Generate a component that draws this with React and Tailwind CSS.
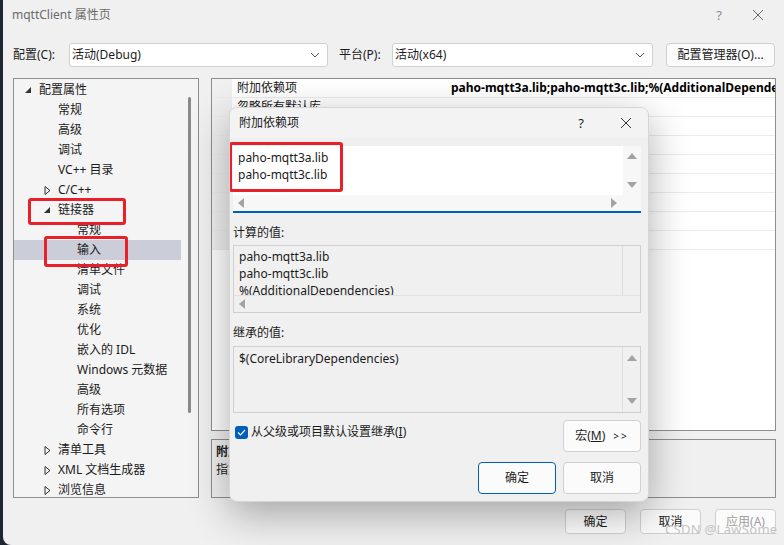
const tree = [
  { label: '配置属性', level: 0, arrow: 'open' },
  { label: '常规', level: 1 },
  { label: '高级', level: 1 },
  { label: '调试', level: 1 },
  { label: 'VC++ 目录', level: 1 },
  { label: 'C/C++', level: 1, arrow: 'closed' },
  { label: '链接器', level: 1, arrow: 'open' },
  { label: '常规', level: 2 },
  { label: '输入', level: 2, selected: true },
  { label: '清单文件', level: 2 },
  { label: '调试', level: 2 },
  { label: '系统', level: 2 },
  { label: '优化', level: 2 },
  { label: '嵌入的 IDL', level: 2 },
  { label: 'Windows 元数据', level: 2 },
  { label: '高级', level: 2 },
  { label: '所有选项', level: 2 },
  { label: '命令行', level: 2 },
  { label: '清单工具', level: 1, arrow: 'closed' },
  { label: 'XML 文档生成器', level: 1, arrow: 'closed' },
  { label: '浏览信息', level: 1, arrow: 'closed' },
]

const props = [
  { name: '附加依赖项', value: 'paho-mqtt3a.lib;paho-mqtt3c.lib;%(AdditionalDependencies)' },
  { name: '忽略所有默认库', value: '' },
  { name: '忽略特定默认库', value: '' },
  { name: '模块定义文件', value: '' },
  { name: '将模块添加到程序集', value: '' },
  { name: '嵌入托管资源文件', value: '' },
  { name: '强制符号引用', value: '' },
  { name: '延迟加载的 DLL', value: '' },
  { name: '程序集链接资源', value: '' },
]

const spacer = ['w-[11px]', 'w-[30px]', 'w-[49px]']

function Arrow({ kind }) {
  if (kind === 'open')
    return (
      <svg width="7" height="7" viewBox="0 0 7 7">
        <polygon points="6,0 6,6 0,6" fill="#333" />
      </svg>
    )
  if (kind === 'closed')
    return (
      <svg width="7" height="9" viewBox="0 0 7 9">
        <polygon points="1,0.5 6,4.5 1,8.5" fill="none" stroke="#333" strokeWidth="1" />
      </svg>
    )
  return null
}

function Tri({ dir }) {
  const pts = {
    up: '0,6 5,0 10,6',
    down: '0,0 10,0 5,6',
    left: '6,0 6,10 0,5',
    right: '0,0 0,10 6,5',
  }[dir]
  const w = dir === 'up' || dir === 'down' ? 10 : 6
  const h = dir === 'up' || dir === 'down' ? 6 : 10
  return (
    <svg width={w} height={h} viewBox={`0 0 ${w} ${h}`}>
      <polygon points={pts} fill="#a3a3a3" />
    </svg>
  )
}

function Combo({ text, width }) {
  return (
    <div className={`${width} h-[24px] bg-white border border-[#d1d1d1] rounded-[3px] flex items-center justify-between pl-[2px] pr-[7px]`}>
      <span>{text}</span>
      <svg width="10" height="6" viewBox="0 0 10 6">
        <polyline points="1,1 5,5 9,1" fill="none" stroke="#555" strokeWidth="1" />
      </svg>
    </div>
  )
}

function Btn({ children, primary, disabled, className = '' }) {
  return (
    <div
      className={`flex items-center justify-center rounded-[4px] bg-[#fbfbfb] border ${
        primary ? 'border-[#005fb8]' : 'border-[#d0d0d0]'
      } ${disabled ? 'text-[#a0a0a0]' : 'text-[#1b1b1b]'} ${className}`}
    >
      {children}
    </div>
  )
}

export default function App() {
  return (
    <div className="relative w-[784px] h-[545px] overflow-hidden bg-[#1e2535] flex font-['Noto_Sans','Noto_Sans_CJK_SC',sans-serif] text-[12px] text-[#1b1b1b] leading-none">
      <div className="ml-[3px] flex-1 min-w-0 bg-[#f0f0f0] rounded-bl-[8px] flex flex-col">
        {/* title bar */}
        <div className="h-[30px] flex items-center justify-between pl-[9px] pr-[20px] text-[#6b6b6b]">
          <span>mqttClient 属性页</span>
          <div className="flex items-center gap-[30px] text-[#8a8a8a]">
            <span className="text-[13px]">?</span>
            <svg width="12" height="12" viewBox="0 0 12 12">
              <path d="M1 1 L11 11 M11 1 L1 11" stroke="#666" strokeWidth="1" />
            </svg>
          </div>
        </div>

        {/* config row */}
        <div className="mt-[13px] h-[24px] flex items-center pl-[10px] pr-[8px]">
          <span className="w-[56px]">配置(C):</span>
          <Combo text="活动(Debug)" width="w-[259px]" />
          <span className="ml-[11px] w-[53px]">平台(P):</span>
          <Combo text="活动(x64)" width="w-[261px]" />
          <Btn className="ml-[13px] w-[109px] h-[24px]">配置管理器(O)...</Btn>
        </div>

        {/* main */}
        <div className="mt-[11px] h-[420px] flex pl-[10px] pr-[8px] gap-[12px]">
          {/* tree */}
          <div className="w-[186px] shrink-0 border border-[#8e8e8e] bg-[#f4f4f4] flex overflow-hidden">
            <div className="flex-1 flex flex-col pt-[1px]">
              {tree.map((t, i) => (
                <div
                  key={i}
                  className={`h-[20px] shrink-0 flex items-center ${t.selected ? 'bg-[#cbced9]' : ''}`}
                >
                  <div className={`${spacer[t.level]} shrink-0`} />
                  <div className="w-[14px] shrink-0 flex items-center">
                    <Arrow kind={t.arrow} />
                  </div>
                  <span className="whitespace-nowrap">{t.label}</span>
                </div>
              ))}
            </div>
            <div className="w-[17px] shrink-0 flex justify-center pt-[18px]">
              <div className="w-[3px] h-[316px] bg-[#8a8a8a] rounded-full" />
            </div>
          </div>

          {/* right */}
          <div className="flex-1 min-w-0 flex flex-col gap-[8px]">
            <div className="h-[353px] border border-[#8e8e8e] bg-white flex flex-col overflow-hidden">
              {props.map((p, i) => (
                <div key={i} className="h-[19px] shrink-0 flex border-b border-[#ececec]">
                  <div className="w-[20px] shrink-0 bg-[#f0f0f0]" />
                  <div className="w-[218px] shrink-0 pl-[5px] flex items-center whitespace-nowrap">{p.name}</div>
                  <div className="flex-1 min-w-0 pl-[1px] flex items-center whitespace-nowrap overflow-hidden font-bold text-black">
                    {p.value}
                  </div>
                </div>
              ))}
            </div>
            <div className="flex-1 border border-[#8e8e8e] bg-[#f0f0f0] px-[4px] pt-[6px] flex flex-col gap-[6px] overflow-hidden">
              <span className="font-bold">附加依赖项</span>
              <span>指定要添加到链接命令行的附加项。</span>
            </div>
          </div>
        </div>

        {/* bottom buttons */}
        <div className="mt-[11px] flex justify-end gap-[14px] pr-[8px]">
          <Btn className="w-[61px] h-[25px] bg-[#fdfdfd]">确定</Btn>
          <Btn className="w-[61px] h-[25px]">取消</Btn>
          <Btn disabled className="w-[61px] h-[25px]">应用(A)</Btn>
        </div>
      </div>

      {/* red annotations on tree */}
      <div className="absolute left-[28px] top-[198px] w-[98px] h-[27px] border-[3px] border-[#e8202a] rounded-[3px]" />
      <div className="absolute left-[44px] top-[236px] w-[84px] h-[31px] border-[3px] border-[#e8202a] rounded-[3px]" />

      {/* modal dialog */}
      <div className="absolute left-[229px] top-[107px] w-[420px] h-[395px] rounded-[8px] bg-[#f0f0f0] border border-[#d6d6d6] shadow-[0_12px_40px_rgba(0,0,0,0.32)] flex flex-col overflow-hidden">
        <div className="h-[30px] shrink-0 bg-[#f3f3f3] flex items-center justify-between pl-[9px] pr-[16px]">
          <span>附加依赖项</span>
          <div className="flex items-center gap-[36px]">
            <span className="text-[13px]">?</span>
            <svg width="12" height="12" viewBox="0 0 12 12">
              <path d="M1 1 L11 11 M11 1 L1 11" stroke="#333" strokeWidth="1" />
            </svg>
          </div>
        </div>
        <div className="flex-1 flex flex-col pl-[3px] pr-[7px]">
          {/* edit box */}
          <div className="relative mt-[8px] h-[67px] bg-white border-b-2 border-[#005fb8] flex flex-col">
            <div className="flex-1 flex">
              <div className="flex-1 pl-[5px] pt-[6px] flex flex-col gap-[5px]">
                <span>paho-mqtt3a.lib</span>
                <span>paho-mqtt3c.lib</span>
              </div>
              <div className="w-[18px] bg-[#f7f7f7] flex flex-col items-center justify-between py-[7px]">
                <Tri dir="up" />
                <Tri dir="down" />
              </div>
            </div>
            <div className="h-[16px] bg-[#f7f7f7] flex items-center justify-between pl-[5px] pr-[24px]">
              <Tri dir="left" />
              <Tri dir="right" />
            </div>
            <div className="absolute left-[-4px] top-[-4px] w-[114px] h-[50px] border-[3px] border-[#e8202a] rounded-[3px]" />
          </div>

          <span className="mt-[14px]">计算的值:</span>
          <div className="mt-[6px] h-[68px] border border-[#cfcfcf] bg-[#f0f0f0] flex flex-col overflow-hidden">
            <div className="flex-1 flex overflow-hidden">
              <div className="flex-1 pl-[5px] pt-[5px] flex flex-col gap-[5px] overflow-hidden">
                <span>paho-mqtt3a.lib</span>
                <span>paho-mqtt3c.lib</span>
                <span>%(AdditionalDependencies)</span>
              </div>
              <div className="w-[18px] border-l border-[#dcdcdc]" />
            </div>
            <div className="h-[17px] shrink-0 bg-[#f0f0f0] border-t border-[#e2e2e2] flex items-center pl-[5px]">
              <Tri dir="left" />
            </div>
          </div>

          <span className="mt-[14px]">继承的值:</span>
          <div className="mt-[7px] h-[67px] border border-[#cfcfcf] bg-[#f0f0f0] flex">
            <div className="flex-1 pl-[5px] pt-[6px]">$(CoreLibraryDependencies)</div>
            <div className="w-[18px] border-l border-[#e2e2e2] flex flex-col items-center justify-between py-[8px]">
              <Tri dir="up" />
              <Tri dir="down" />
            </div>
          </div>

          <div className="mt-[7px] flex justify-between">
            <div className="flex items-start gap-[3px] pl-[2px] pt-[6px]">
              <div className="w-[13px] h-[13px] rounded-[3px] bg-[#005fb8] flex items-center justify-center">
                <svg width="9" height="7" viewBox="0 0 9 7">
                  <polyline points="1,3.5 3.5,6 8,1" fill="none" stroke="white" strokeWidth="1.2" />
                </svg>
              </div>
              <span>
                从父级或项目默认设置继承(<span className="underline">I</span>)
              </span>
            </div>
            <Btn className="w-[78px] h-[32px] gap-[8px]">
              <span>
                宏(<span className="underline">M</span>)
              </span>
              <span className="text-[10px] tracking-[2px]">&gt;&gt;</span>
            </Btn>
          </div>

          <div className="mt-[10px] flex justify-end gap-[7px]">
            <Btn primary className="w-[78px] h-[32px]">确定</Btn>
            <Btn className="w-[78px] h-[32px]">取消</Btn>
          </div>
        </div>
      </div>

      {/* watermark */}
      <span className="absolute left-[665px] top-[523px] text-[13px] text-[#c4c4c4] tracking-[0.3px]">CSDN @LawSome</span>
    </div>
  )
}
